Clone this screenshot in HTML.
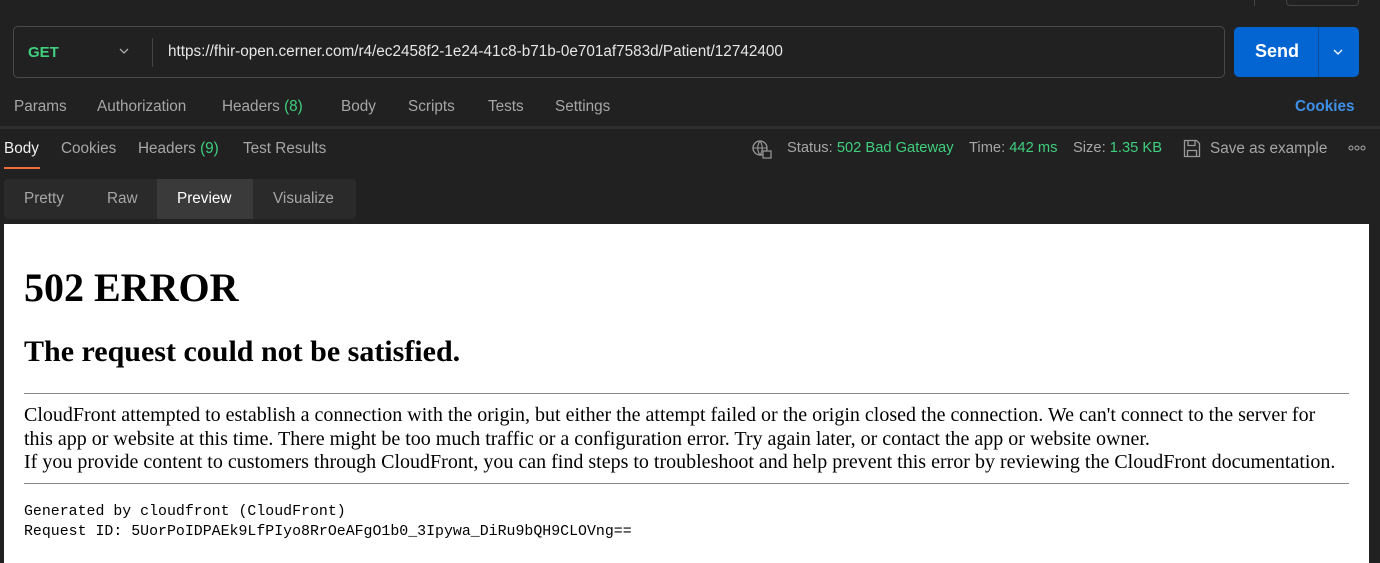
<!DOCTYPE html>
<html><head><style>
*{box-sizing:border-box;margin:0;padding:0}
body{width:1380px;height:563px;background:#212121;font-family:"Liberation Sans",sans-serif;position:relative;overflow:hidden;color:#a6a6a6}
.a{position:absolute;white-space:nowrap}
.g{color:#3fcf7e}
.t{font-size:15.3px}
</style></head><body>
<div class="a" style="left:1286px;top:-8px;width:73px;height:14px;border:1px solid #444;border-radius:4px"></div>
<div class="a" style="left:1254px;top:0;width:1px;height:6px;background:#444"></div>
<div class="a" style="left:13px;top:26px;width:1212px;height:52px;border:1px solid #4a4a4a;border-radius:5px"></div>
<div class="a" style="left:28px;top:44px;font-size:15px;font-weight:bold;color:#3fcf7e">GET</div>
<svg class="a" style="left:118px;top:47px" width="12" height="8" viewBox="0 0 12 8"><path d="M2 2l4 4 4-4" fill="none" stroke="#aaa" stroke-width="1.3"/></svg>
<div class="a" style="left:152px;top:38px;width:1px;height:29px;background:#444"></div>
<div class="a" style="left:168px;top:43px;font-size:15.3px;color:#e6e6e6">https://fhir-open.cerner.com/r4/ec2458f2-1e24-41c8-b71b-0e701af7583d/Patient/12742400</div>
<div class="a" style="left:1234px;top:27px;width:125px;height:50px;background:#0265d2;border-radius:5px"></div>
<div class="a" style="left:1318px;top:27px;width:1px;height:50px;background:#0a4f9e"></div>
<div class="a" style="left:1255px;top:41px;font-size:18px;font-weight:bold;color:#fff">Send</div>
<svg class="a" style="left:1332px;top:48px" width="12" height="8" viewBox="0 0 12 8"><path d="M2 2l4 4 4-4" fill="none" stroke="#fff" stroke-width="1.3"/></svg>
<div class="a t" style="left:14px;top:98px">Params</div>
<div class="a t" style="left:97px;top:98px">Authorization</div>
<div class="a t" style="left:222px;top:98px">Headers <span class="g">(8)</span></div>
<div class="a t" style="left:341px;top:98px">Body</div>
<div class="a t" style="left:408px;top:98px">Scripts</div>
<div class="a t" style="left:488px;top:98px">Tests</div>
<div class="a t" style="left:555px;top:98px">Settings</div>
<div class="a t" style="left:1295px;top:98px;color:#3d8fe8;font-weight:bold">Cookies</div>
<div class="a" style="left:0;top:126px;width:1380px;height:3px;background:#2e2e2e"></div>
<div class="a t" style="left:4px;top:140px;color:#f0f0f0">Body</div>
<div class="a" style="left:4px;top:167px;width:36px;height:2px;background:#f26b3a"></div>
<div class="a t" style="left:61px;top:140px">Cookies</div>
<div class="a t" style="left:138px;top:140px">Headers <span class="g">(9)</span></div>
<div class="a t" style="left:243px;top:140px">Test Results</div>
<svg class="a" style="left:751px;top:139px" width="22" height="20" viewBox="0 0 22 20"><circle cx="9" cy="9" r="7" fill="none" stroke="#999" stroke-width="1.3"/><path d="M2 9h14M9 2c-3 4-3 10 0 14M9 2c3 4 3 10 0 14" fill="none" stroke="#999" stroke-width="1.1"/><rect x="12" y="12" width="8" height="7" fill="#212121" stroke="#999" stroke-width="1.2"/></svg>
<div class="a" style="left:787px;top:140px;font-size:14.7px">Status: <span class="g">502 Bad Gateway</span></div>
<div class="a" style="left:969px;top:140px;font-size:14.7px">Time: <span class="g">442 ms</span></div>
<div class="a" style="left:1073px;top:140px;font-size:14.7px">Size: <span class="g">1.35 KB</span></div>
<svg class="a" style="left:1183px;top:139px" width="18" height="19" viewBox="0 0 18 19"><path d="M1.5 1.5h12l3 3v13h-15z M5 1.5v5h7v-5 M4.5 17.5v-6h9v6" fill="none" stroke="#999" stroke-width="1.3"/></svg>
<div class="a t" style="left:1210px;top:140px">Save as example</div>
<svg class="a" style="left:1348px;top:145px" width="18" height="6" viewBox="0 0 18 6"><circle cx="3" cy="3" r="2" fill="none" stroke="#aaa" stroke-width="1"/><circle cx="9" cy="3" r="2" fill="none" stroke="#aaa" stroke-width="1"/><circle cx="15" cy="3" r="2" fill="none" stroke="#aaa" stroke-width="1"/></svg>
<div class="a" style="left:4px;top:179px;width:352px;height:40px;background:#2a2a2a;border-radius:4px"></div>
<div class="a" style="left:157px;top:179px;width:96px;height:40px;background:#3a3a3a"></div>
<div class="a t" style="left:24px;top:190px">Pretty</div>
<div class="a t" style="left:107px;top:190px">Raw</div>
<div class="a t" style="left:177px;top:190px;color:#fff">Preview</div>
<div class="a t" style="left:273px;top:190px">Visualize</div>
<div class="a" style="left:4px;top:224px;width:1365px;height:339px;background:#fff;color:#000;font-family:'Liberation Serif',serif">
<div class="a" style="left:20px;top:40px;font-size:40px;font-weight:bold">502 ERROR</div>
<div class="a" style="left:20px;top:111px;font-size:30px;font-weight:bold">The request could not be satisfied.</div>
<div class="a" style="left:20px;top:169px;width:1325px;height:1px;background:#888"></div>
<div class="a" style="left:20px;top:180px;font-size:20px;line-height:23.5px;white-space:normal;width:1318px">CloudFront attempted to establish a connection with the origin, but either the attempt failed or the origin closed the connection. We can't connect to the server for this app or website at this time. There might be too much traffic or a configuration error. Try again later, or contact the app or website owner.<br>If you provide content to customers through CloudFront, you can find steps to troubleshoot and help prevent this error by reviewing the CloudFront documentation.</div>
<div class="a" style="left:20px;top:259px;width:1325px;height:1px;background:#888"></div>
<div class="a" style="left:20px;top:278px;font-family:'Liberation Mono',monospace;font-size:14.9px;line-height:20px">Generated by cloudfront (CloudFront)<br>Request ID: 5UorPoIDPAEk9LfPIyo8RrOeAFgO1b0_3Ipywa_DiRu9bQH9CLOVng==</div>
</div>
</body></html>
